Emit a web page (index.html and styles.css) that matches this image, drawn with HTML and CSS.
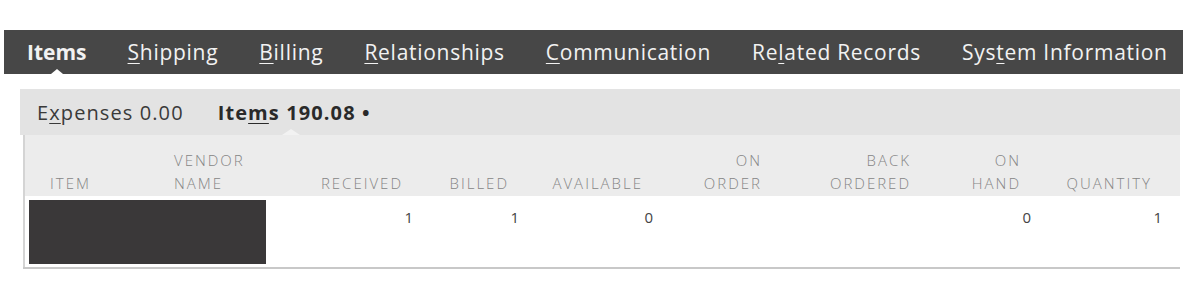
FILE: index.html
```html
<!DOCTYPE html>
<html>
<head>
  <link rel="stylesheet" href="styles.css">
</head>
<body>
  <div class="tabs">
    <span class="tab active">Items</span>
    <span class="tab"><u>S</u>hipping</span>
    <span class="tab"><u>B</u>illing</span>
    <span class="tab"><u>R</u>elationships</span>
    <span class="tab"><u>C</u>ommunication</span>
    <span class="tab">Re<u>l</u>ated Records</span>
    <span class="tab">Sys<u>t</u>em Information</span>
  </div>

  <div class="panel">
    <div class="subtabs">
      <span class="subtab">E<u>x</u>penses 0.00</span>
      <span class="subtab active">Ite<u>m</u>s 190.08 &bull;</span>
    </div>
    <table class="grid">
      <colgroup>
        <col style="width:137px">
        <col style="width:140px">
        <col style="width:116px">
        <col style="width:106px">
        <col style="width:134px">
        <col style="width:119px">
        <col style="width:149px">
        <col style="width:110px">
        <col>
      </colgroup>
      <thead>
        <tr>
          <th class="left first">Item</th>
          <th class="left vendor">Vendor<br>Name</th>
          <th>Received</th>
          <th>Billed</th>
          <th>Available</th>
          <th>On<br>Order</th>
          <th>Back<br>Ordered</th>
          <th>On<br>Hand</th>
          <th class="last">Quantity</th>
        </tr>
      </thead>
      <tbody>
        <tr>
          <td colspan="2" class="redacted-cell"><div class="redacted"></div></td>
          <td>1</td>
          <td>1</td>
          <td>0</td>
          <td></td>
          <td></td>
          <td>0</td>
          <td class="last">1</td>
        </tr>
      </tbody>
    </table>
  </div>
</body>
</html>
```

FILE: styles.css
```css
* {
  box-sizing: border-box;
}

body {
  margin: 0;
  padding: 30px 0 0 4px;
  background: #fff;
  font-family: "Open Sans", "DejaVu Sans", sans-serif;
}

.tabs {
  height: 44px;
  background: #474747;
  display: flex;
  align-items: center;
  gap: 41px;
  padding-left: 23px;
}

.tab {
  position: relative;
  color: #f2f2f2;
  font-size: 21px;
  letter-spacing: 0.72px;
  line-height: 44px;
  white-space: nowrap;
}

.tab u,
.subtab u {
  text-decoration-thickness: 1px;
  text-underline-offset: 3px;
}

.tab.active {
  font-weight: bold;
  letter-spacing: 0;
}

.tab.active::after {
  content: "";
  position: absolute;
  left: 50%;
  bottom: 0;
  margin-left: -6px;
  border-left: 6px solid transparent;
  border-right: 6px solid transparent;
  border-bottom: 5px solid #fff;
}

.panel {
  margin: 15px 0 0 16px;
  width: 1160px;
}

.subtabs {
  height: 46px;
  background: #e3e3e3;
  display: flex;
  align-items: center;
  gap: 34px;
  padding-left: 17px;
  padding-top: 2px;
}

.subtab {
  position: relative;
  font-size: 20px;
  letter-spacing: 1.1px;
  color: #3a3a3a;
  line-height: 44px;
  white-space: nowrap;
}

.subtab.active {
  font-weight: bold;
  color: #2a2a2a;
}

.subtab.active::after {
  content: "";
  position: absolute;
  left: 64px;
  bottom: 0;
  border-left: 9px solid transparent;
  border-right: 9px solid transparent;
  border-bottom: 6px solid #f2f2f2;
}

.grid {
  margin-left: 3px;
  width: 1157px;
  border-collapse: collapse;
  table-layout: fixed;
  border-left: 2px solid #d4d4d4;
  border-bottom: 2px solid #c8c8c8;
}

.grid th {
  height: 61px;
  background: #ececec;
  color: #858585;
  font-size: 15px;
  font-weight: 300;
  letter-spacing: 2px;
  text-transform: uppercase;
  text-align: right;
  vertical-align: bottom;
  line-height: 23px;
  padding: 0 14px 1px 0;
}

.grid th.left {
  text-align: left;
}

.grid th.first {
  padding-left: 25px;
}

.grid th.vendor {
  padding-left: 13px;
}

.grid th.last {
  padding-right: 28px;
}

.grid td {
  height: 72px;
  font-size: 15px;
  color: #444;
  text-align: right;
  vertical-align: top;
  padding: 11px 4px 0 0;
}

.grid td.last {
  padding-right: 18px;
}

.grid td.redacted-cell {
  padding: 4px 0 2px 4px;
}

.redacted {
  width: 237px;
  height: 64px;
  background: #3a3839;
}
```
